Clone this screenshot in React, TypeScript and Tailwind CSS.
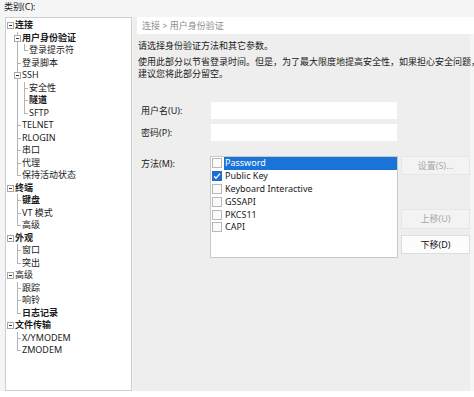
import React from 'react';

type Node = {
  label: string;
  depth: number;
  bold?: boolean;
  box?: boolean;
  last?: boolean;
  cont?: boolean;
};

const tree: Node[] = [
  { label: '连接', depth: 0, bold: true, box: true },
  { label: '用户身份验证', depth: 1, bold: true, box: true },
  { label: '登录提示符', depth: 2, last: true, cont: true },
  { label: '登录脚本', depth: 1 },
  { label: 'SSH', depth: 1, box: true },
  { label: '安全性', depth: 2, cont: true },
  { label: '隧道', depth: 2, bold: true, cont: true },
  { label: 'SFTP', depth: 2, last: true, cont: true },
  { label: 'TELNET', depth: 1 },
  { label: 'RLOGIN', depth: 1 },
  { label: '串口', depth: 1 },
  { label: '代理', depth: 1 },
  { label: '保持活动状态', depth: 1, last: true },
  { label: '终端', depth: 0, bold: true, box: true },
  { label: '键盘', depth: 1, bold: true },
  { label: 'VT 模式', depth: 1 },
  { label: '高级', depth: 1, last: true },
  { label: '外观', depth: 0, bold: true, box: true },
  { label: '窗口', depth: 1 },
  { label: '突出', depth: 1, last: true },
  { label: '高级', depth: 0, box: true },
  { label: '跟踪', depth: 1 },
  { label: '响铃', depth: 1 },
  { label: '日志记录', depth: 1, bold: true, last: true },
  { label: '文件传输', depth: 0, bold: true, box: true },
  { label: 'X/YMODEM', depth: 1 },
  { label: 'ZMODEM', depth: 1, last: true },
];

const methods = [
  { label: 'Password', checked: false, selected: true },
  { label: 'Public Key', checked: true },
  { label: 'Keyboard Interactive', checked: false },
  { label: 'GSSAPI', checked: false },
  { label: 'PKCS11', checked: false },
  { label: 'CAPI', checked: false },
];

function Expander() {
  return (
    <span className="absolute left-0 top-[3px] w-[7px] h-[7px] border border-[#a8a8a8] bg-white flex items-center justify-center">
      <span className="w-[3px] h-px bg-[#333]" />
    </span>
  );
}

function TreeRow({ node }: { node: Node }) {
  return (
    <div className="flex h-[12.5px] items-center">
      <span className="relative w-[7px] h-full shrink-0">
        {node.depth === 0 && node.box && <Expander />}
      </span>
      {node.depth === 2 && (
        <span className="relative w-[7px] h-full shrink-0">
          {node.cont && <span className="absolute left-[3px] top-0 w-px h-full bg-[#b4b4b4]" />}
        </span>
      )}
      {node.depth >= 1 && (
        <span className="relative w-[7px] h-full shrink-0">
          <span className={`absolute left-[3px] top-0 w-px bg-[#b4b4b4] ${node.last ? 'h-1/2' : 'h-full'}`} />
          <span className="absolute left-[3px] top-1/2 h-px w-[4px] bg-[#b4b4b4]" />
          {node.box && <Expander />}
        </span>
      )}
      <span className={`ml-px whitespace-nowrap text-[#1a1a1a] ${node.bold ? 'font-bold' : ''}`}>{node.label}</span>
    </div>
  );
}

function Checkbox({ checked }: { checked: boolean }) {
  if (checked) {
    return (
      <span className="w-[10px] h-[10px] shrink-0 bg-[#1c6fd0] flex items-center justify-center">
        <svg width="8" height="8" viewBox="0 0 8 8">
          <path d="M1 4.2 L3 6.2 L7 1.6" stroke="white" strokeWidth="1.3" fill="none" />
        </svg>
      </span>
    );
  }
  return <span className="block w-[10px] h-[10px] shrink-0 border border-[#b8b8b8] bg-[#fafafa]" />;
}

export default function App() {
  return (
    <div className="w-[474px] h-[397px] bg-[#f5f5f5] flex flex-col text-[9px] leading-[12px] text-[#1a1a1a] font-[family-name:Noto_Sans,Noto_Sans_CJK_SC,sans-serif] overflow-hidden">
      <div className="h-[17px] pl-[4px] flex items-center pb-[3px]">类别(C):</div>
      <div className="flex h-[374px]">
        <div className="ml-[5px] w-[127px] bg-white border border-[#cfcfcf] pt-px pl-px">
          {tree.map((n, i) => (
            <TreeRow key={i} node={n} />
          ))}
        </div>
        <div className="ml-px w-[337px] bg-[#eeeeee] flex flex-col">
          <div className="ml-[4px] -mr-[4px] h-[17px] bg-white flex items-center pl-[5px] text-[#8c8c8c]">
            连接 &gt; 用户身份验证
          </div>
          <div className="pl-[5px] pt-[6px]">
            <div>请选择身份验证方法和其它参数。</div>
            <div className="mt-[4px] whitespace-nowrap">使用此部分以节省登录时间。但是，为了最大限度地提高安全性，如果担心安全问题，</div>
            <div>建议您将此部分留空。</div>
          </div>
          <div className="mt-[22px] pl-[8px] flex items-center h-[17px]">
            <span className="w-[70px]">用户名(U):</span>
            <span className="w-[186px] h-[17px] bg-white" />
          </div>
          <div className="mt-[5px] pl-[8px] flex items-center h-[17px]">
            <span className="w-[70px]">密码(P):</span>
            <span className="w-[186px] h-[17px] bg-white" />
          </div>
          <div className="mt-[15px] pl-[8px] flex items-start">
            <span className="w-[69px] pt-[2px]">方法(M):</span>
            <div className="w-[188px] h-[102px] bg-white border border-[#c8c8c8] flex flex-col">
              {methods.map((m) => (
                <div key={m.label} className="h-[12.8px] flex items-center">
                  <span className="ml-px flex">
                    <Checkbox checked={m.checked} />
                  </span>
                  <span
                    className={`ml-[2px] flex-1 h-full flex items-center pl-px ${m.selected ? 'bg-[#1a74d8] text-white' : ''}`}
                  >
                    {m.label}
                  </span>
                </div>
              ))}
            </div>
            <div className="ml-[3px] w-[69px] flex flex-col">
              <button className="h-[19px] bg-[#f3f3f3] border border-[#e6e6e6] text-[#a8a8a8]">设置(S)...</button>
              <button className="mt-[34px] h-[20px] bg-[#f3f3f3] border border-[#e6e6e6] text-[#a8a8a8]">上移(U)</button>
              <button className="mt-[6px] h-[19px] bg-[#fcfcfc] border border-[#dddddd] text-[#111]">下移(D)</button>
            </div>
          </div>
        </div>
      </div>
      <div className="h-[6px] bg-white" />
    </div>
  );
}
